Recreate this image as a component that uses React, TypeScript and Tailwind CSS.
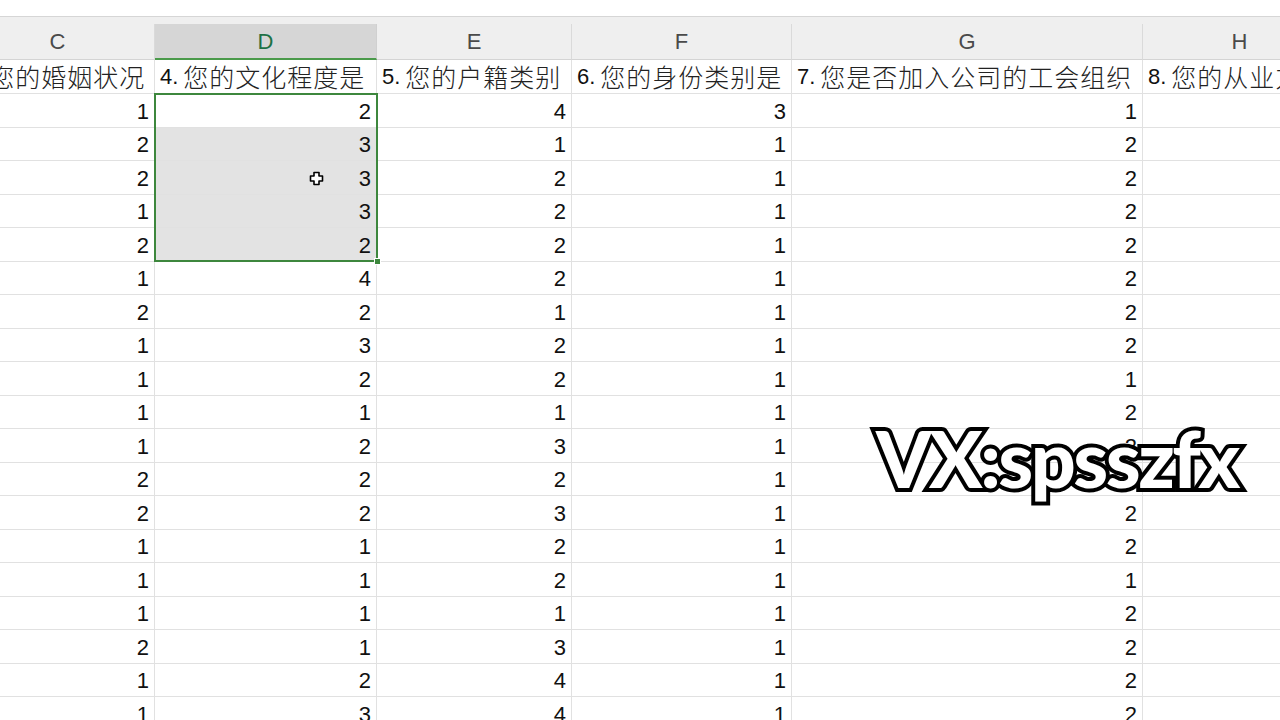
import React from "react";

const cols = [
  { letter: "C", w: 194, head: ["3.", "您的婚姻状况"] },
  { letter: "D", w: 222, head: ["4.", "您的文化程度是"] },
  { letter: "E", w: 195, head: ["5.", "您的户籍类别"] },
  { letter: "F", w: 220, head: ["6.", "您的身份类别是"] },
  { letter: "G", w: 351, head: ["7.", "您是否加入公司的工会组织"] },
  { letter: "H", w: 194, head: ["8.", "您的从业方式"] },
];

const data: number[][] = [
  [1, 2, 4, 3, 1],
  [2, 3, 1, 1, 2],
  [2, 3, 2, 1, 2],
  [1, 3, 2, 1, 2],
  [2, 2, 2, 1, 2],
  [1, 4, 2, 1, 2],
  [2, 2, 1, 1, 2],
  [1, 3, 2, 1, 2],
  [1, 2, 2, 1, 1],
  [1, 1, 1, 1, 2],
  [1, 2, 3, 1, 2],
  [2, 2, 2, 1, 1],
  [2, 2, 3, 1, 2],
  [1, 1, 2, 1, 2],
  [1, 1, 2, 1, 1],
  [1, 1, 1, 1, 2],
  [2, 1, 3, 1, 2],
  [1, 2, 4, 1, 2],
  [1, 3, 4, 1, 2],
];

export default function App() {
  return (
    <div className="relative w-[1280px] h-[720px] overflow-hidden bg-white font-['Liberation_Sans',Arial,sans-serif] text-black">
      <div className="h-[17px] bg-white border-b border-[#d6d6d6]" />
      <div className="relative ml-[-39px] w-max">
        <div className="h-[7px] bg-[#efefef]" />
        {/* column letters */}
        <div className="flex h-[36px] bg-[#efefef]">
          {cols.map((c) => (
            <div
              key={c.letter}
              style={{ width: c.w }}
              className={
                c.letter === "D"
                  ? "flex items-center justify-center bg-[#d6d6d6] border-r border-[#d0d0d0] border-b-2 border-b-[#4a9a4a] text-[#1e7145] text-[22px]"
                  : "flex items-center justify-center border-r border-[#dadada] border-b border-b-[#d4d4d4] text-[#4a4a4a] text-[22px]"
              }
            >
              {c.letter}
            </div>
          ))}
        </div>
        {/* header texts */}
        <div className="flex h-[34px]">
          {cols.map((c) => (
            <div
              key={c.letter}
              style={{ width: c.w }}
              className="flex items-center pl-[5px] border-r border-b border-[#e1e1e1] overflow-hidden whitespace-nowrap"
            >
              <span className="text-[22px] text-[#111] mr-[5px]">{c.head[0]}</span>
              <span className="text-[25px] leading-none tracking-[1px] text-[#222] font-['Noto_Sans_CJK_SC',sans-serif] font-light">
                {c.head[1]}
              </span>
            </div>
          ))}
        </div>
        {/* data rows */}
        {data.map((row, ri) => (
          <div key={ri} className="flex h-[33.5px]">
            {cols.map((c, ci) => {
              const sel = ci === 1 && ri >= 1 && ri <= 4;
              return (
                <div
                  key={c.letter}
                  style={{ width: c.w }}
                  className={
                    (sel ? "bg-[#e3e3e3] " : "") +
                    "flex items-center justify-end pr-[5px] pt-[2px] border-r border-b border-[#e1e1e1] text-[22px] text-[#111]"
                  }
                >
                  {ci < 5 ? row[ci] : ""}
                </div>
              );
            })}
          </div>
        ))}
        {/* selection */}
        <div className="absolute left-[193px] top-[76px] w-[224px] h-[169px] border-2 border-[#3d873d]">
          <div className="absolute right-[-5px] bottom-[-5px] w-[7px] h-[7px] bg-[#3d873d] border border-white" />
        </div>
      </div>

      {/* cursor */}
      <svg className="absolute left-[309px] top-[171px]" width="15" height="15" viewBox="0 0 15 15">
        <path
          d="M5 1.5h5v3.5h3.5v5H10v3.5H5V10H1.5V5H5z"
          fill="#fff"
          stroke="#000"
          strokeWidth="1.6"
          strokeLinejoin="round"
        />
      </svg>

      {/* watermark */}
      <div className="absolute left-[876px] top-[418px] text-[79px] leading-none font-black tracking-[-2.5px] text-white font-['Lato',sans-serif] [-webkit-text-stroke:8px_#000] [paint-order:stroke_fill] whitespace-nowrap">
        VX:spsszfx
      </div>
    </div>
  );
}
